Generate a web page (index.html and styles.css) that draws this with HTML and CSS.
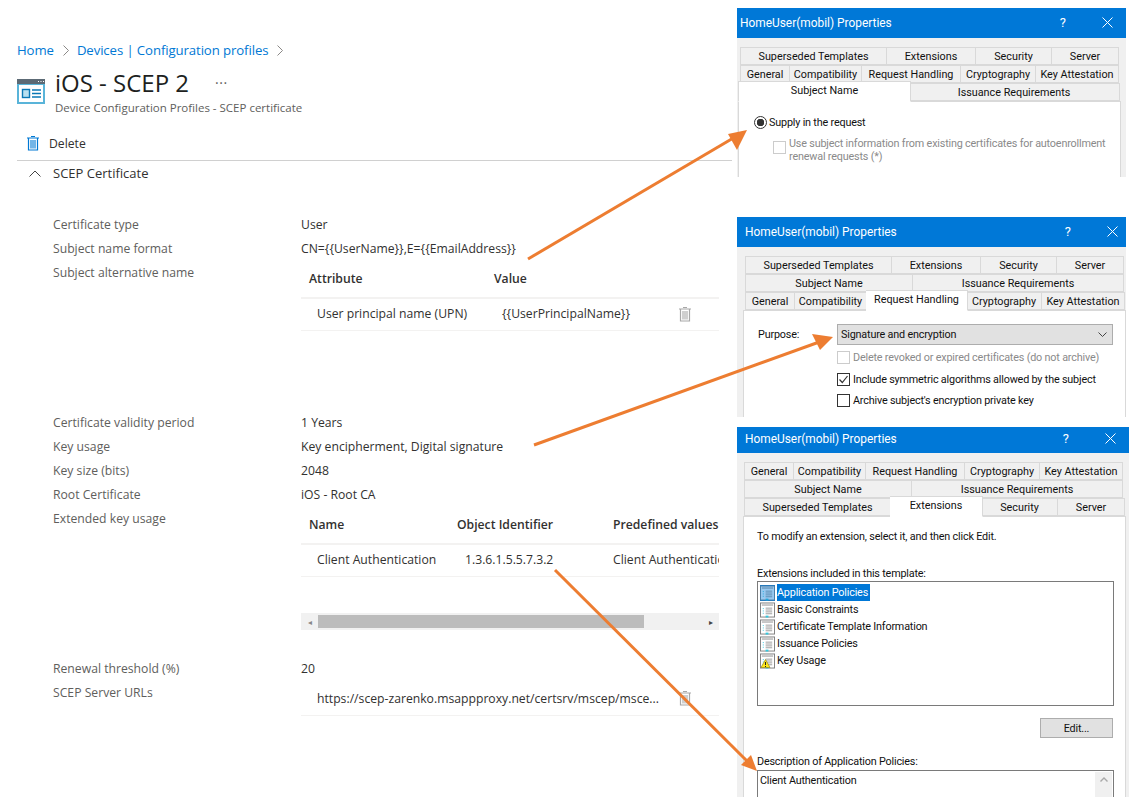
FILE: index.html
```html
<!DOCTYPE html>
<html lang="en">
<head>
<meta charset="utf-8">
<title>iOS - SCEP 2</title>
<link rel="stylesheet" href="styles.css">
</head>
<body>
<svg class="defs" width="0" height="0" aria-hidden="true">
  <symbol id="trash" viewBox="0 0 14 16">
    <path d="M5 1.500h4M1 3h12M2.500 3v12h9V3" fill="none" stroke="currentColor" stroke-width="1.200"/>
    <rect x="4" y="5" width="6" height="8.500" fill="currentColor" opacity=".55"/>
  </symbol>
  <symbol id="ext" viewBox="0 0 16 16">
    <rect x=".5" y=".5" width="15" height="15" fill="#fff" stroke="#7d7d7d"/>
    <path d="M2 3h12M2 1.800h12" stroke="#b5b5b5"/>
    <path d="M6 6h7M6 8h7M6 10h7M6 12h7" stroke="#9a9a9a"/>
    <path d="M3.500 6v1M3.500 8.500v1M3.500 11v1" stroke="#30c8e0"/>
    <rect x="6" y="14" width="3" height="2" fill="#30c8e0"/>
  </symbol>
  <symbol id="crumb" viewBox="0 0 6 11">
    <path d="M.5.500 5.500 5.500.5 10.500" fill="none" stroke="#8a8886"/>
  </symbol>
</svg>
<div class="page">
  <main class="blade">
    <nav class="crumbs"><a>Home</a><svg class="sep"><use href="#crumb"/></svg><a>Devices | Configuration profiles</a><svg class="sep"><use href="#crumb"/></svg></nav>
    <header class="head">
      <svg class="head-icon" viewBox="0 0 28 25">
        <rect width="28" height="25" fill="#59b4d9"/>
        <rect y="0" width="28" height="5" fill="#5c6a75"/>
        <rect x="2" y="6" width="24" height="17" fill="#fff"/>
        <rect x="5.500" y="10.500" width="7" height="8" fill="#b8e0f0" stroke="#0a78b5" stroke-width="1.400"/>
        <path d="M15 11h9M15 14.500h9M15 18h9" stroke="#0a78b5" stroke-width="1.400"/>
        <path d="M21 2.500h1M23.500 2.500h1M26 2.500h1" stroke="#fff"/>
      </svg>
      <div>
        <div class="title-row"><h1>iOS - SCEP 2</h1><span class="more">···</span></div>
        <p class="sub">Device Configuration Profiles - SCEP certificate</p>
      </div>
    </header>
    <div class="toolbar"><svg class="del-icon"><use href="#trash"/></svg><span>Delete</span></div>
    <div class="section-head">
      <svg class="chev" viewBox="0 0 12 7"><path d="M.5 6.500 6 1l5.500 5.500" fill="none" stroke="#444" stroke-width="1"/></svg>
      <span>SCEP Certificate</span>
    </div>

    <div class="props first">
      <div class="k">Certificate type</div><div class="v">User</div>
      <div class="k">Subject name format</div><div class="v">CN={{UserName}},E={{EmailAddress}}</div>
      <div class="k">Subject alternative name</div>
      <div class="cell">
        <div class="thead san"><span class="c-attr">Attribute</span><span>Value</span></div>
        <div class="trow san"><span class="c-attr2">User principal name (UPN)</span><span class="c-val">{{UserPrincipalName}}</span><svg class="row-trash"><use href="#trash"/></svg></div>
      </div>
    </div>

    <div class="props second">
      <div class="k">Certificate validity period</div><div class="v">1 Years</div>
      <div class="k">Key usage</div><div class="v">Key encipherment, Digital signature</div>
      <div class="k">Key size (bits)</div><div class="v">2048</div>
      <div class="k">Root Certificate</div><div class="v">iOS - Root CA</div>
      <div class="k">Extended key usage</div>
      <div class="cell">
        <div class="thead eku"><span class="e1">Name</span><span class="e2">Object Identifier</span><span class="e3">Predefined values</span></div>
        <div class="trow eku"><span class="e1b">Client Authentication</span><span class="e2b">1.3.6.1.5.5.7.3.2</span><span class="e3b">Client Authentication</span></div>
        <div class="hscroll"><span class="arr">◂</span><span class="thumb"></span><span class="arr right">▸</span></div>
      </div>
    </div>

    <div class="props third">
      <div class="k">Renewal threshold (%)</div><div class="v">20</div>
      <div class="k">SCEP Server URLs</div>
      <div class="cell">
        <div class="trow url"><span class="url-text">https://scep-zarenko.msappproxy.net/certsrv/mscep/msce...</span><svg class="row-trash"><use href="#trash"/></svg></div>
      </div>
    </div>
  </main>

  <aside class="dialogs">
    <section class="dlg d1">
      <div class="bar"><span class="bar-t">HomeUser(mobil) Properties</span><span class="q">?</span><svg class="x" viewBox="0 0 11 11"><path d="M.5.500l10 10M10.500.500l-10 10" stroke="#fff" fill="none"/></svg></div>
      <div class="tabs">
        <div class="tabrow"><span class="tab a1">Superseded Templates</span><span class="tab a2">Extensions</span><span class="tab a3">Security</span><span class="tab a4">Server</span></div>
        <div class="tabrow"><span class="tab b1">General</span><span class="tab b2">Compatibility</span><span class="tab b3">Request Handling</span><span class="tab b4">Cryptography</span><span class="tab b5">Key Attestation</span></div>
        <div class="tabrow"><span class="tab c1 on on-subj">Subject Name</span><span class="tab c2">Issuance Requirements</span></div>
      </div>
      <div class="panel">
        <label class="radio-line"><span class="radio"></span>Supply in the request</label>
        <div class="check-wrap dis"><span class="box dim"></span><span>Use subject information from existing certificates for autoenrollment<br>renewal requests (*)</span></div>
      </div>
    </section>

    <section class="dlg d2">
      <div class="bar"><span class="bar-t">HomeUser(mobil) Properties</span><span class="q">?</span><svg class="x" viewBox="0 0 11 11"><path d="M.5.500l10 10M10.500.500l-10 10" stroke="#fff" fill="none"/></svg></div>
      <div class="tabs">
        <div class="tabrow"><span class="tab a1">Superseded Templates</span><span class="tab a2">Extensions</span><span class="tab a3">Security</span><span class="tab a4">Server</span></div>
        <div class="tabrow"><span class="tab c1x">Subject Name</span><span class="tab c2">Issuance Requirements</span></div>
        <div class="tabrow"><span class="tab b1">General</span><span class="tab b2">Compatibility</span><span class="tab b3 on on-req">Request Handling</span><span class="tab b4">Cryptography</span><span class="tab b5">Key Attestation</span></div>
      </div>
      <div class="panel">
        <div class="purpose"><span class="p-label">Purpose:</span><div class="select"><span>Signature and encryption</span><svg class="sel-chev" viewBox="0 0 9 5"><path d="M.5.500l4 4 4-4" fill="none" stroke="#444"/></svg></div></div>
        <div class="check dis c-first"><span class="box dim"></span>Delete revoked or expired certificates (do not archive)</div>
        <div class="check c-second"><span class="box"><svg viewBox="0 0 11 11"><path d="M1.500 5.500 4.300 8.500 9.500 2" fill="none" stroke="#333" stroke-width="1.200"/></svg></span>Include symmetric algorithms allowed by the subject</div>
        <div class="check c-third"><span class="box"></span>Archive subject's encryption private key</div>
      </div>
    </section>

    <section class="dlg d3">
      <div class="bar"><span class="bar-t">HomeUser(mobil) Properties</span><span class="q">?</span><svg class="x" viewBox="0 0 11 11"><path d="M.5.500l10 10M10.500.500l-10 10" stroke="#fff" fill="none"/></svg></div>
      <div class="tabs">
        <div class="tabrow"><span class="tab b1">General</span><span class="tab b2">Compatibility</span><span class="tab b3">Request Handling</span><span class="tab b4">Cryptography</span><span class="tab b5">Key Attestation</span></div>
        <div class="tabrow"><span class="tab c1x">Subject Name</span><span class="tab c2">Issuance Requirements</span></div>
        <div class="tabrow"><span class="tab a1">Superseded Templates</span><span class="tab a2 on on-ext">Extensions</span><span class="tab a3">Security</span><span class="tab a4">Server</span></div>
      </div>
      <div class="panel">
        <p class="intro">To modify an extension, select it, and then click Edit.</p>
        <p class="lbl-list">Extensions included in this template:</p>
        <div class="list">
          <div class="li"><span class="ic-wrap sel-wrap"><svg class="li-ic sel-ic"><use href="#ext"/></svg></span><span class="selected">Application Policies</span></div>
          <div class="li"><span class="ic-wrap"><svg class="li-ic"><use href="#ext"/></svg></span><span>Basic Constraints</span></div>
          <div class="li"><span class="ic-wrap"><svg class="li-ic"><use href="#ext"/></svg></span><span>Certificate Template Information</span></div>
          <div class="li"><span class="ic-wrap"><svg class="li-ic"><use href="#ext"/></svg></span><span>Issuance Policies</span></div>
          <div class="li warn"><span class="ic-wrap"><svg class="li-ic"><use href="#ext"/></svg></span><svg class="tri" viewBox="0 0 10 9"><path d="M5 .5 9.500 8.500H.5z" fill="#ffe81a" stroke="#8a7a00" stroke-width=".6"/><path d="M5 3v3M5 7v1" stroke="#222"/></svg><span>Key Usage</span></div>
        </div>
        <div class="btn-row"><span class="btn">Edit...</span></div>
        <p class="lbl-desc">Description of Application Policies:</p>
        <div class="desc"><span>Client Authentication</span><span class="vs"><svg viewBox="0 0 8 5"><path d="M.5 4.500 4 1l3.500 3.500" fill="none" stroke="#a8a8a8" stroke-width="1.400"/></svg></span></div>
      </div>
    </section>
  </aside>

  <svg class="arrows" viewBox="0 0 1134 805" aria-hidden="true">
    <path d="M528 259 735 137" stroke="#ed7d31" stroke-width="3" fill="none"/>
    <path d="M747 130 728 134 737 150z" fill="#ed7d31"/>
    <path d="M534 445 822 341" stroke="#ed7d31" stroke-width="3" fill="none"/>
    <path d="M833 337 812 334 820 350z" fill="#ed7d31"/>
    <path d="M555 570 748 762" stroke="#ed7d31" stroke-width="3" fill="none"/>
    <path d="M757 771 741 765 751 755z" fill="#ed7d31"/>
  </svg>
</div>
</body>
</html>
```
FILE: styles.css
```css
* { box-sizing: border-box; }
html, body { margin: 0; padding: 0; background: #fff; }
body { font-family: "Open Sans", "Noto Sans", sans-serif; color: #323130; overflow: hidden; }
.defs { position: absolute; }
.page { position: relative; width: 1134px; height: 805px; display: flex; overflow: hidden; }

/* Azure blade */
.blade { width: 737px; flex: none; padding: 41px 5px 0 17px; font-size: 12.2px; }
.crumbs { height: 18px; display: flex; align-items: center; font-size: 13.2px; color: #0078d4; letter-spacing: -.1px; }
.crumbs .sep { width: 6px; height: 11px; margin: 0 8px 0 9px; flex: none; }
.head { display: flex; margin-top: 11px; height: 51px; }
.head-icon { width: 28px; height: 25px; margin: 9px 10px 0 0; flex: none; }
.title-row { display: flex; align-items: center; height: 24px; }
h1 { margin: 0; font-size: 24px; font-weight: 400; color: #201f1e; white-space: nowrap; }
.more { margin: 2px 0 0 26px; font-size: 14px; color: #605e5c; line-height: 12px; letter-spacing: .5px; }
.sub { margin: 6px 0 0; font-size: 11.5px; color: #605e5c; white-space: nowrap; }
.toolbar { display: flex; align-items: center; height: 30px; margin: 7px 0 2px; padding-left: 9px; }
.del-icon { width: 14px; height: 16px; color: #0078d4; margin-right: 9px; }
.section-head { border-top: 1px solid #d0d0d0; height: 25px; display: flex; align-items: center; padding-left: 12px; font-size: 13px; }
.chev { width: 12px; height: 7px; margin-right: 12px; }

.props { display: grid; grid-template-columns: 248px 418px; margin-left: 36px; grid-auto-rows: 24px; }
.first { margin-top: 28px; }
.second { margin-top: 78px; }
.third { margin-top: 78px; }
.k { line-height: 24px; color: #605e5c; white-space: nowrap; }
.v { line-height: 24px; color: #323130; white-space: nowrap; }
.cell { position: relative; grid-row: span 3; min-width: 0; overflow: hidden; height: 140px; }
.first .cell { height: 72px; }
.third .cell { height: 36px; }
.thead { display: flex; align-items: center; padding-left: 8px; font-weight: 600; border-bottom: 2px solid #f3f2f1; white-space: nowrap; }
.first .thead { height: 37px; margin-top: 1px; padding-bottom: 2px; }
.second .thead { height: 38px; padding-bottom: 1px; }
.trow { display: flex; align-items: center; height: 32px; padding-left: 16px; border-bottom: 1px solid #f3f2f1; white-space: nowrap; overflow: hidden; }
.san.trow { padding-bottom: 2px; }
.eku.trow { padding-bottom: 2px; }
.trow > span { flex: none; }
.c-attr { width: 185px; }
.c-attr2 { width: 185px; }
.c-val { width: 176px; }
.row-trash { width: 14px; height: 16px; color: #a8a8a8; flex: none; }
.e1 { width: 148px; }
.e2 { width: 156px; }
.e3 { white-space: nowrap; }
.e1b { width: 148px; }
.e2b { width: 148px; }
.hscroll { display: flex; align-items: center; height: 17px; margin-top: 36px; background: #f1f1f1; color: #888; font-size: 8px; }
.arr { width: 17px; text-align: center; flex: none; }
.arr.right { margin-left: auto; color: #444; }
.thumb { width: 326px; height: 13px; background: #bcbcbc; }
.url { height: 35px; }
.url-text { width: 361px; }

/* Windows dialogs */
.dialogs { width: 393px; flex: none; padding-top: 8px; font-family: Roboto, "Noto Sans", sans-serif; font-size: 10.8px; letter-spacing: -.18px; color: #111; }
.dlg { position: relative; background: #f0f0f0; }
.d1 { width: 389px; height: 169px; }
.d2 { width: 389px; height: 200px; margin-top: 40px; }
.d3 { width: 392px; height: 370px; margin-top: 10px; }
.bar { height: 30px; background: #0078d7; color: #fff; display: flex; align-items: center; padding-left: 3px; font-size: 11.9px; letter-spacing: 0; padding-bottom: 1px; }
.d2 .bar, .d3 .bar { padding-left: 8px; }
.d3 .bar { height: 26px; padding-bottom: 3px; }
.bar-t { flex: 1; white-space: nowrap; }
.q { font-size: 13px; margin-right: 36px; }
.x { width: 11px; height: 11px; margin-right: 13px; }
.d2 .x { margin-right: 8px; }
.tabs { padding: 9px 0 0 3px; letter-spacing: 0; }
.d2 .tabs { padding-left: 8px; }
.d3 .tabs { padding-left: 7px; }
.tabrow { display: flex; height: 18px; }
.tab { border: 1px solid #d9d9d9; border-width: 1px 1px 1px 0; text-align: center; padding-top: 1px; line-height: 16px; white-space: nowrap; background: #f0f0f0; }
.tab:first-child { border-left-width: 1px; }
.a1 { width: 147px; } .a2 { width: 89px; } .a3 { width: 76px; } .a4 { width: 67px; }
.b1 { width: 50px; } .b2 { width: 72px; } .b3 { width: 99px; } .b4 { width: 75px; } .b5 { width: 83px; }
.c1 { width: 170px; } .c1x { width: 168px; } .c2 { width: 211px; }
.on { position: relative; z-index: 2; background: #fff; border-bottom-color: #fff; height: 21px; margin-top: -2px; }
.on-subj { width: 173px; margin-left: -2px; margin-right: -2px; }
.on-req { width: 102px; margin-left: -1px; margin-right: -1px; }
.on-ext { width: 93px; margin-left: -1px; margin-right: -1px; }
.panel { position: absolute; background: #fff; border: 1px solid #d9d9d9; border-bottom: 0; left: 1px; right: 5px; bottom: 0; }
.d1 .panel { top: 93px; }
.d2 .panel { top: 93px; left: 6px; right: 0; }
.d3 .panel { top: 89px; left: 6px; right: 3px; }

.radio-line { display: flex; align-items: center; margin: 12px 0 0 15px; height: 16px; }
.radio { width: 13px; height: 13px; border-radius: 50%; border: 1px solid #333; margin-right: 2px; position: relative; background: radial-gradient(circle, #333 0 3.500px, #fff 4px); }
.dis { color: #8a8a8a; }
.box { width: 13px; height: 13px; border: 1px solid #333; background: #fff; flex: none; margin-right: 3px; display: block; }
.box svg { display: block; width: 11px; height: 11px; }
.box.dim { border-color: #ccc; }
.check-wrap { display: flex; margin: 7px 0 0 34px; line-height: 13px; align-items: flex-start; white-space: nowrap; }
.check-wrap .box { margin-top: 4px; }
.purpose { display: flex; align-items: center; margin: 12px 0 0 14px; height: 22px; }
.p-label { width: 79px; }
.select { width: 276px; height: 21px; background: #e1e1e1; border: 1px solid #adadad; display: flex; align-items: center; padding: 0 3px; justify-content: space-between; }
.sel-chev { width: 9px; height: 5px; margin-right: 2px; }
.check { display: flex; align-items: center; margin-left: 93px; white-space: nowrap; height: 14px; }
.c-first { margin-top: 5px; }
.c-second { margin-top: 8px; }
.c-third { margin-top: 7px; }
.intro { margin: 13px 0 0 13px; line-height: 14px; }
.lbl-list { margin: 23px 0 0 13px; line-height: 14px; }
.list { margin: 0 0 0 13px; width: 357px; height: 125px; border: 1px solid #7a7a7a; padding: 2px 2px; background: #fff; }
.li { position: relative; display: flex; align-items: center; height: 17px; white-space: nowrap; }
.ic-wrap { display: block; width: 15px; height: 16px; margin-right: 2px; flex: none; }
.li-ic { display: block; width: 15px; height: 16px; }
.sel-wrap { background: #0078d7; }
.sel-ic { opacity: .6; }
.selected { background: #0078d7; color: #fff; padding-right: 2px; line-height: 17px; }
.tri { position: absolute; left: 0; top: 7px; width: 11px; height: 9px; }
.btn-row { display: flex; justify-content: flex-end; width: 369px; margin-top: 12px; }
.btn { width: 73px; height: 20px; background: #e1e1e1; border: 1px solid #adadad; text-align: center; line-height: 19px; }
.lbl-desc { margin: 17px 0 0 13px; line-height: 14px; }
.desc { display: flex; justify-content: space-between; margin: 1px 0 0 13px; width: 357px; height: 27px; border: 1px solid #7a7a7a; border-bottom: 0; padding: 3px 1px 0 2px; }
.vs { width: 17px; height: 25px; background: #f0f0f0; display: flex; justify-content: center; padding-top: 5px; margin-top: -2px; }
.vs svg { width: 8px; height: 5px; }

.arrows { position: absolute; inset: 0; width: 1134px; height: 805px; pointer-events: none; }
```
